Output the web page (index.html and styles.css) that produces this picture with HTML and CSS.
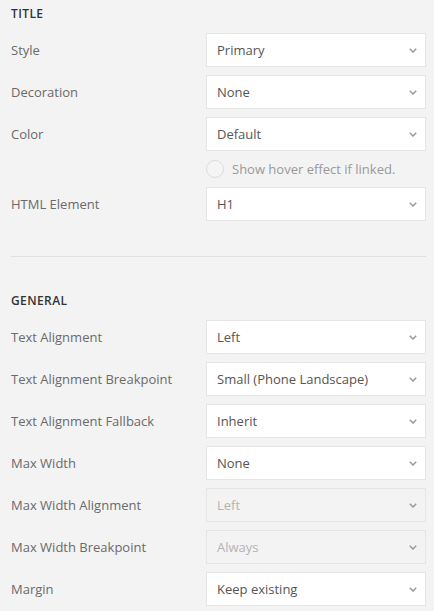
FILE: index.html
```html
<!DOCTYPE html>
<html>
<head>
<meta charset="utf-8">
<link rel="stylesheet" href="styles.css">
</head>
<body>
<div class="panel">
  <section class="section">
    <h3 class="heading">TITLE</h3>
    <div class="row"><span class="label">Style</span><div class="select"><span>Primary</span><svg class="chev" viewBox="0 0 8 5"><polyline points="0.8,0.8 4,4 7.2,0.8"/></svg></div></div>
    <div class="row"><span class="label">Decoration</span><div class="select"><span>None</span><svg class="chev" viewBox="0 0 8 5"><polyline points="0.8,0.8 4,4 7.2,0.8"/></svg></div></div>
    <div class="row"><span class="label">Color</span><div class="select"><span>Default</span><svg class="chev" viewBox="0 0 8 5"><polyline points="0.8,0.8 4,4 7.2,0.8"/></svg></div></div>
    <div class="row check-row"><span></span><div class="check"><span class="circle"></span><span class="check-text">Show hover effect if linked.</span></div></div>
    <div class="row"><span class="label">HTML Element</span><div class="select"><span>H1</span><svg class="chev" viewBox="0 0 8 5"><polyline points="0.8,0.8 4,4 7.2,0.8"/></svg></div></div>
  </section>
  <hr class="divider">
  <section class="section">
    <h3 class="heading">GENERAL</h3>
    <div class="row"><span class="label">Text Alignment</span><div class="select"><span>Left</span><svg class="chev" viewBox="0 0 8 5"><polyline points="0.8,0.8 4,4 7.2,0.8"/></svg></div></div>
    <div class="row"><span class="label">Text Alignment Breakpoint</span><div class="select"><span>Small (Phone Landscape)</span><svg class="chev" viewBox="0 0 8 5"><polyline points="0.8,0.8 4,4 7.2,0.8"/></svg></div></div>
    <div class="row"><span class="label">Text Alignment Fallback</span><div class="select"><span>Inherit</span><svg class="chev" viewBox="0 0 8 5"><polyline points="0.8,0.8 4,4 7.2,0.8"/></svg></div></div>
    <div class="row"><span class="label">Max Width</span><div class="select"><span>None</span><svg class="chev" viewBox="0 0 8 5"><polyline points="0.8,0.8 4,4 7.2,0.8"/></svg></div></div>
    <div class="row"><span class="label">Max Width Alignment</span><div class="select disabled"><span>Left</span><svg class="chev" viewBox="0 0 8 5"><polyline points="0.8,0.8 4,4 7.2,0.8"/></svg></div></div>
    <div class="row"><span class="label">Max Width Breakpoint</span><div class="select disabled"><span>Always</span><svg class="chev" viewBox="0 0 8 5"><polyline points="0.8,0.8 4,4 7.2,0.8"/></svg></div></div>
    <div class="row"><span class="label">Margin</span><div class="select"><span>Keep existing</span><svg class="chev" viewBox="0 0 8 5"><polyline points="0.8,0.8 4,4 7.2,0.8"/></svg></div></div>
  </section>
</div>
</body>
</html>
```
FILE: styles.css
```css
html, body {
  margin: 0;
  padding: 0;
  background: #f3f3f3;
}
body {
  font-family: "Open Sans", "Liberation Sans", sans-serif;
  font-size: 13px;
  color: #666;
}
.panel {
  padding: 4px 8px 0 11px;
}
.section {
  display: flex;
  flex-direction: column;
  gap: 8px;
}
.heading {
  margin: 0 0 1px 0;
  font-size: 12px;
  font-weight: 600;
  line-height: 20px;
  color: #333;
  letter-spacing: 0.4px;
}
.row {
  display: grid;
  grid-template-columns: 1fr 220px;
  align-items: center;
  height: 34px;
}
.label {
  color: #6a6a6a;
  white-space: nowrap;
}
.select {
  box-sizing: border-box;
  height: 34px;
  background: #fff;
  border: 1px solid #e5e5e5;
  display: flex;
  align-items: center;
  justify-content: space-between;
  padding: 0 8px 0 10px;
  color: #555;
}
.select.disabled {
  background: #f3f3f3;
  color: #b4b4b4;
}
.chev {
  width: 8px;
  height: 5px;
  fill: none;
  stroke: #999;
  stroke-width: 1.5;
}
.check-row {
  height: 20px;
}
.check {
  display: flex;
  align-items: center;
  gap: 8px;
}
.circle {
  box-sizing: border-box;
  width: 18px;
  height: 18px;
  border-radius: 50%;
  border: 1px solid #dcdcdc;
  background: #f5f5f5;
}
.check-text {
  color: #999;
}
.divider {
  border: 0;
  border-top: 1px solid #e0e0e0;
  margin: 35px 0 34px 0;
}
```
